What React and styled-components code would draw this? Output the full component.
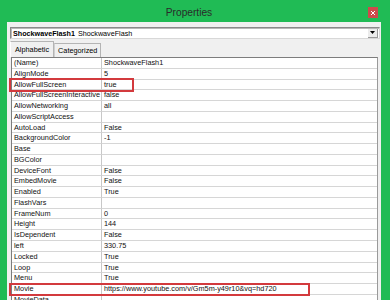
import React from "react";
import styled, { createGlobalStyle } from "styled-components";

const ROW_H = 10.77;

const rows = [
  ["(Name)", "ShockwaveFlash1"],
  ["AlignMode", "5"],
  ["AllowFullScreen", "true"],
  ["AllowFullScreenInteractive", "false"],
  ["AllowNetworking", "all"],
  ["AllowScriptAccess", ""],
  ["AutoLoad", "False"],
  ["BackgroundColor", "-1"],
  ["Base", ""],
  ["BGColor", ""],
  ["DeviceFont", "False"],
  ["EmbedMovie", "False"],
  ["Enabled", "True"],
  ["FlashVars", ""],
  ["FrameNum", "0"],
  ["Height", "144"],
  ["IsDependent", "False"],
  ["left", "330.75"],
  ["Locked", "True"],
  ["Loop", "True"],
  ["Menu", "True"],
  ["Movie", "https://www.youtube.com/v/Gm5m-y49r10&vq=hd720"],
  ["MovieData", ""],
];

// red annotation boxes: row index and width in px
const marks = [
  { row: 2, width: 125 },
  { row: 21, width: 301 },
];

const GlobalStyle = createGlobalStyle`
  html, body {
    margin: 0;
    padding: 0;
    overflow: hidden;
  }
  body {
    font-family: "Liberation Sans", Arial, sans-serif;
  }
`;

const Window = styled.div`
  width: 390px;
  height: 300px;
  background: #20bb55;
  display: flex;
  flex-direction: column;
  overflow: hidden;
`;

const TitleBar = styled.div`
  height: 22px;
  flex: none;
  display: grid;
  grid-template-columns: 1fr auto 1fr;
  align-items: center;
  padding-right: 12px;
`;

const Title = styled.div`
  grid-column: 2;
  font-size: 10.2px;
  color: #2a2a2a;
  padding-top: 3px;
`;

const CloseButton = styled.div`
  grid-column: 3;
  justify-self: end;
  width: 10px;
  height: 11px;
  margin-top: 3px;
  background: #cf4a4c;
  display: flex;
  align-items: center;
  justify-content: center;
`;

const Body = styled.div`
  flex: 1;
  min-height: 0;
  margin: 0 9px 0 7px;
  background: #f0f0f0;
  padding: 5px 1px 0 3px;
  display: flex;
  flex-direction: column;
`;

const Combo = styled.div`
  height: 12px;
  flex: none;
  box-sizing: border-box;
  background: #fff;
  border: 1px solid #8a8a8a;
  border-right-color: #d8d8d8;
  border-bottom-color: #d8d8d8;
  box-shadow: inset 1px 1px 0 #b8b8b8;
  display: flex;
  align-items: center;
  padding-left: 2px;
  font-size: 7.2px;
  color: #000;
`;

const ComboName = styled.b`
  font-weight: bold;
  margin-right: 3px;
`;

const ComboArrow = styled.div`
  margin-left: auto;
  margin-right: 1px;
  width: 9px;
  height: 8px;
  background: #ececec;
  border-right: 1px solid #9a9a9a;
  border-bottom: 1px solid #9a9a9a;
  display: flex;
  align-items: center;
  justify-content: center;
`;

const TabRow = styled.div`
  height: 16px;
  flex: none;
  margin-top: 2px;
  display: flex;
  align-items: flex-end;
`;

const Tab = styled.div`
  box-sizing: border-box;
  height: ${(p) => (p.$active ? 16 : 14)}px;
  padding: 0 ${(p) => (p.$active ? 4 : 3)}px;
  border: 1px solid #b4b4b4;
  border-bottom: none;
  border-left-color: ${(p) => (p.$active ? "#ffffff" : "#d0d0d0")};
  background: #f0f0f0;
  font-size: 7.3px;
  color: #000;
  display: flex;
  align-items: center;
`;

const GridWrap = styled.div`
  position: relative;
  flex: 1;
  min-height: 0;
  margin: 0 2px 0 1px;
`;

const Grid = styled.div`
  height: 100%;
  box-sizing: border-box;
  border: 1px solid #7d7d7d;
  border-right-color: #9a9a9a;
  border-bottom: none;
  background: #fff;
  overflow: hidden;
  display: grid;
  grid-template-columns: 90px 1fr;
  grid-auto-rows: ${ROW_H}px;
  align-content: start;
`;

const Cell = styled.div`
  box-sizing: border-box;
  border-bottom: 1px solid #d6d6d6;
  border-right: ${(p) => (p.$name ? "1px solid #c8c8c8" : "none")};
  padding-left: 2px;
  font-size: 7.3px;
  line-height: 10px;
  color: #111;
  white-space: nowrap;
  overflow: hidden;
`;

const Mark = styled.div`
  position: absolute;
  left: -2px;
  box-sizing: border-box;
  height: ${ROW_H + 3}px;
  border: 2px solid #d33a3d;
  pointer-events: none;
`;

const App = () => {
  return (
    <Window>
      <GlobalStyle />
      <TitleBar>
        <Title>Properties</Title>
        <CloseButton>
          <svg width="4" height="4" viewBox="0 0 4 4">
            <path d="M0 0L4 4M4 0L0 4" stroke="#fff" strokeWidth="1" />
          </svg>
        </CloseButton>
      </TitleBar>
      <Body>
        <Combo>
          <ComboName>ShockwaveFlash1</ComboName>
          ShockwaveFlash
          <ComboArrow>
            <svg width="5" height="3" viewBox="0 0 5 3">
              <path d="M0 0H5L2.5 3Z" fill="#000" />
            </svg>
          </ComboArrow>
        </Combo>
        <TabRow>
          <Tab $active>Alphabetic</Tab>
          <Tab>Categorized</Tab>
        </TabRow>
        <GridWrap>
          <Grid>
            {rows.map(([name, value]) => (
              <React.Fragment key={name}>
                <Cell $name>{name}</Cell>
                <Cell>{value}</Cell>
              </React.Fragment>
            ))}
          </Grid>
          {marks.map((m) => (
            <Mark
              key={m.row}
              style={{ top: 1 + m.row * ROW_H - 1.5, width: m.width }}
            />
          ))}
        </GridWrap>
      </Body>
    </Window>
  );
};

export default App;
